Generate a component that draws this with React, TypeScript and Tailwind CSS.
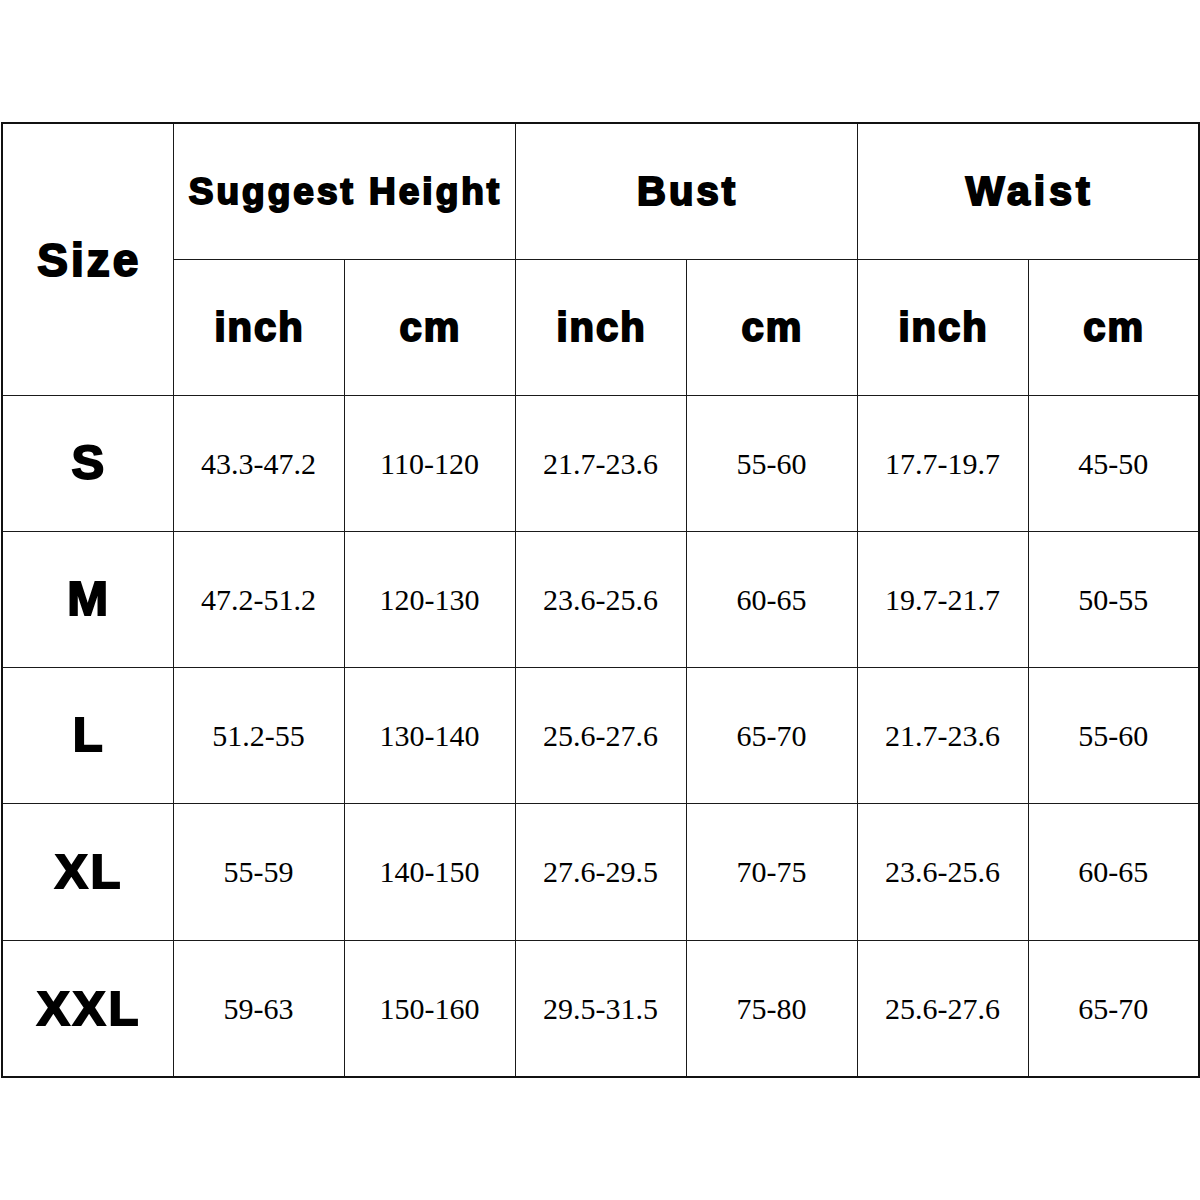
const rows = [
  { size: 'S', h: 'h-[136px]', vals: ['43.3-47.2', '110-120', '21.7-23.6', '55-60', '17.7-19.7', '45-50'] },
  { size: 'M', h: 'h-[136px]', vals: ['47.2-51.2', '120-130', '23.6-25.6', '60-65', '19.7-21.7', '50-55'] },
  { size: 'L', h: 'h-[136px]', vals: ['51.2-55', '130-140', '25.6-27.6', '65-70', '21.7-23.6', '55-60'] },
  { size: 'XL', h: 'h-[137px]', vals: ['55-59', '140-150', '27.6-29.5', '70-75', '23.6-25.6', '60-65'] },
  { size: 'XXL', h: 'h-[137px]', vals: ['59-63', '150-160', '29.5-31.5', '75-80', '25.6-27.6', '65-70'] },
];

const heavy = "font-['Liberation_Sans',Arial,sans-serif] font-bold text-black [-webkit-text-stroke:2px_black]";
const cell = 'border border-[#1a1a1a] text-center align-middle p-0';

export default function App() {
  return (
    <div className="w-[1200px] h-[1200px] bg-white pt-[122px] pl-[1px]">
      <table className="table-fixed border-collapse border-2 border-[#111] w-[1197px]">
        <colgroup>
          {[0, 1, 2, 3, 4, 5, 6].map(i => (
            <col key={i} className="w-[171px]" />
          ))}
        </colgroup>
        <thead>
          <tr className="h-[136px]">
            <td rowSpan={2} className={cell}>
              <span className={`${heavy} text-[46px] tracking-[3px] pl-[3px] pt-[2px] inline-block`}>Size</span>
            </td>
            <td colSpan={2} className={cell}>
              <span className={`${heavy} text-[37px] tracking-[3px] pl-[3px]`}>Suggest Height</span>
            </td>
            <td colSpan={2} className={cell}>
              <span className={`${heavy} text-[40px] tracking-[3px] pl-[3px]`}>Bust</span>
            </td>
            <td colSpan={2} className={cell}>
              <span className={`${heavy} text-[41px] tracking-[4px] pl-[4px]`}>Waist</span>
            </td>
          </tr>
          <tr className="h-[136px]">
            {['inch', 'cm', 'inch', 'cm', 'inch', 'cm'].map((t, i) => (
              <td key={i} className={cell}>
                <span className={`${heavy} text-[40px] tracking-[2px] pl-[2px]`}>{t}</span>
              </td>
            ))}
          </tr>
        </thead>
        <tbody>
          {rows.map(r => (
            <tr key={r.size} className={r.h}>
              <td className={cell}>
                <span className={`${heavy} text-[49px] tracking-[3px] pl-[3px]`}>{r.size}</span>
              </td>
              {r.vals.map((v, i) => (
                <td key={i} className={cell}>
                  <span className="font-['Liberation_Serif','Times_New_Roman',serif] text-[30px] text-black">{v}</span>
                </td>
              ))}
            </tr>
          ))}
        </tbody>
      </table>
    </div>
  );
}
